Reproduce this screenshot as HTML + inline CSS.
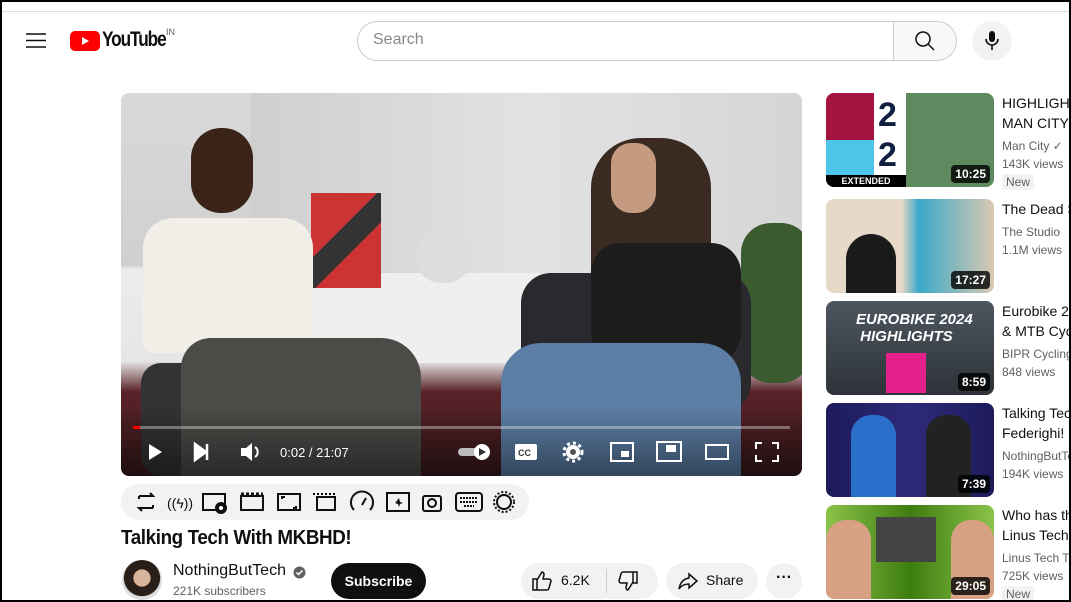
<!DOCTYPE html>
<html><head><meta charset="utf-8"><style>
*{box-sizing:border-box;margin:0;padding:0}
body{width:1071px;height:602px;overflow:hidden;background:#fff;font-family:"Liberation Sans",Arial,sans-serif;position:relative;color:#0f0f0f}
.frame{position:absolute;inset:0;border:2px solid #000;pointer-events:none;z-index:10}
.abs{position:absolute}
.thumb{position:absolute;left:826px;width:168px;height:94px;border-radius:8px;overflow:hidden}
.dur{position:absolute;right:4px;bottom:4px;background:rgba(0,0,0,.8);color:#fff;font-size:12px;font-weight:bold;padding:2px 4px;border-radius:4px}
.st{position:absolute;left:1002px;font-size:14px;white-space:nowrap}
.sm{position:absolute;left:1002px;font-size:12px;color:#606060;white-space:nowrap}
.new{position:absolute;left:1002px;font-size:12px;color:#606060;background:#f2f2f2;padding:1px 4px;border-radius:2px}
.ic{fill:none;stroke:#fff;stroke-width:2}
.tb{fill:none;stroke:#0f0f0f;stroke-width:2}
</style></head><body>
<div class="frame"></div>
<div class="abs" style="left:2px;top:11px;width:1067px;height:1px;background:#ddd"></div>
<svg class="abs" style="left:26px;top:33px" width="20" height="15"><path d="M0 1h20M0 7.5h20M0 14h20" stroke="#0f0f0f" stroke-width="1.6"/></svg>
<svg class="abs" style="left:70px;top:31px" width="32" height="21"><rect width="30" height="20" rx="5" fill="#f00"/><path d="M12 6v8l7-4z" fill="#fff"/></svg>
<div class="abs" style="left:102px;top:28px;font-size:21px;font-weight:bold;letter-spacing:-1.3px;transform:scaleX(.82);transform-origin:left">YouTube</div>
<div class="abs" style="left:166px;top:27px;font-size:9px;color:#606060">IN</div>
<div class="abs" style="left:357px;top:21px;width:537px;height:40px;border:1px solid #ccc;border-radius:20px 0 0 20px;border-right:none"></div>
<div class="abs" style="left:373px;top:31px;font-size:16px;color:#888">Search</div>
<div class="abs" style="left:893px;top:21px;width:64px;height:40px;border:1px solid #ccc;border-radius:0 20px 20px 0;background:#f8f8f8"></div>
<svg class="abs" style="left:914px;top:30px" width="22" height="22"><circle cx="9" cy="9" r="7" fill="none" stroke="#0f0f0f" stroke-width="1.5"/><path d="M14 14l6 6" stroke="#0f0f0f" stroke-width="1.5"/></svg>
<div class="abs" style="left:972px;top:21px;width:40px;height:40px;border-radius:50%;background:#f2f2f2"></div>
<svg class="abs" style="left:984px;top:31px" width="16" height="20"><rect x="5" y="0" width="6" height="11" rx="3" fill="#0f0f0f"/><path d="M2 8a6 6 0 0 0 12 0M8 14v5" stroke="#0f0f0f" stroke-width="1.6" fill="none"/></svg>
<!-- video -->
<div class="abs" style="left:121px;top:93px;width:681px;height:383px;border-radius:8px;overflow:hidden;background:linear-gradient(#d9d9d9 0%,#d0d0d0 45%,#ececec 46%,#e6e6e6 70%,#5a2228 78%,#3a1a1c 100%)">
 <div class="abs" style="left:130px;top:0;width:560px;height:190px;background:linear-gradient(90deg,#cfcfcf,#e2e2e2,#d5d5d5)"></div>
 <div class="abs" style="left:180px;top:180px;width:520px;height:90px;background:#efefef"></div>
 <div class="abs" style="left:190px;top:100px;width:70px;height:95px;background:linear-gradient(135deg,#c33 0 40%,#333 40% 60%,#c33 60%)"></div>
 <div class="abs" style="left:295px;top:140px;width:55px;height:50px;border-radius:25px;background:#ddd"></div>
 <div class="abs" style="left:620px;top:130px;width:70px;height:160px;background:#3b5a2e;border-radius:30px"></div>
 <div class="abs" style="left:20px;top:270px;width:130px;height:113px;background:#333;border-radius:20px"></div>
 <div class="abs" style="left:22px;top:125px;width:170px;height:135px;background:#f2eee8;border-radius:30px 30px 10px 10px"></div>
 <div class="abs" style="left:70px;top:35px;width:62px;height:85px;background:#3a2418;border-radius:30px"></div>
 <div class="abs" style="left:60px;top:245px;width:240px;height:138px;background:#4b4b48;border-radius:30px 40px 0 0"></div>
 <div class="abs" style="left:400px;top:180px;width:230px;height:140px;background:#2a2a2e;border-radius:30px"></div>
 <div class="abs" style="left:470px;top:45px;width:120px;height:210px;background:#3a2a22;border-radius:50px 50px 10px 10px"></div>
 <div class="abs" style="left:490px;top:50px;width:45px;height:70px;background:#c49a80;border-radius:20px"></div>
 <div class="abs" style="left:470px;top:150px;width:150px;height:120px;background:#1c1c1c;border-radius:30px"></div>
 <div class="abs" style="left:380px;top:250px;width:240px;height:133px;background:#5c7ea6;border-radius:40px 40px 0 0"></div>
 <div class="abs" style="left:0;bottom:0;width:681px;height:70px;background:linear-gradient(transparent,rgba(0,0,0,.45))"></div>
 <div class="abs" style="left:12px;top:333px;width:657px;height:3px;background:rgba(255,255,255,.35)"><div style="width:7px;height:3px;background:#f00"></div></div>
</div>
<svg class="abs" style="left:121px;top:436px" width="681" height="32">
 <path d="M28 8v16l13-8z" fill="#fff"/>
 <path d="M74 8v16l11-8zM86 8v16" fill="#fff" stroke="#fff" stroke-width="2.5"/>
 <path d="M120 12h5l6-5v18l-6-5h-5z" fill="#fff"/><path d="M134 11a6 6 0 0 1 0 10" class="ic"/>
 <text x="159" y="21" fill="#fff" font-size="13" font-family="Liberation Sans">0:02 / 21:07</text>
 <rect x="337" y="12" width="24" height="8" rx="4" fill="#bbb"/><circle cx="361" cy="16" r="8" fill="#fff"/><path d="M358 12v8l7-4z" fill="#333"/>
 <rect x="394" y="8" width="22" height="16" rx="2" fill="#fff"/><text x="397" y="20" font-size="9" font-weight="bold" fill="#333" font-family="Liberation Sans">CC</text>
 <circle cx="452" cy="16" r="7" fill="#fff"/><circle cx="452" cy="16" r="9" fill="none" stroke="#fff" stroke-width="3" stroke-dasharray="3 3"/><circle cx="452" cy="16" r="3" fill="#555"/>
 <rect x="490" y="7" width="22" height="18" class="ic"/><rect x="500" y="15" width="8" height="6" fill="#fff"/>
 <rect x="536" y="6" width="24" height="19" class="ic"/><rect x="545" y="9" width="10" height="7" fill="#fff"/>
 <rect x="585" y="9" width="22" height="14" class="ic"/>
 <path d="M635 13V7h6M651 7h6v6M657 19v6h-6M641 25h-6v-6" class="ic" stroke-width="2.5"/>
</svg>
<!-- toolbar -->
<div class="abs" style="left:121px;top:484px;width:408px;height:36px;border-radius:18px;background:#f2f2f2"></div>
<svg class="abs" style="left:121px;top:484px" width="408" height="36">
 <path d="M18 12h14l-3-3M32 24H18l3 3M18 12v3M32 24v-3" class="tb"/>
 <text x="46" y="24" font-size="14" fill="#0f0f0f" font-family="Liberation Sans">((ϟ))</text>
 <rect x="82" y="10" width="22" height="16" class="tb"/><circle cx="100" cy="24" r="6" fill="#0f0f0f"/><circle cx="100" cy="24" r="2" fill="#fff"/>
 <rect x="120" y="12" width="22" height="14" class="tb"/><path d="M120 10h22" stroke="#0f0f0f" stroke-width="3" stroke-dasharray="3 2"/>
 <rect x="157" y="10" width="22" height="16" class="tb"/><path d="M161 15v-2h3M175 22v2h-3" class="tb"/>
 <path d="M192 10h22" stroke="#0f0f0f" stroke-width="2" stroke-dasharray="2 2"/><rect x="196" y="13" width="18" height="13" class="tb"/>
 <path d="M233 26a11 11 0 1 1 16 0" class="tb"/><path d="M241 21l4-7" class="tb"/>
 <rect x="266" y="9" width="22" height="18" class="tb"/><path d="M275 18l3-4 1 4 3 1-3 1-1 3-1-3-3-1z" fill="#0f0f0f"/>
 <rect x="302" y="12" width="18" height="15" rx="2" class="tb"/><circle cx="311" cy="19" r="4" class="tb"/>
 <rect x="335" y="9" width="26" height="18" rx="3" class="tb"/><path d="M339 14h18M339 18h18M343 22h10" stroke="#0f0f0f" stroke-width="2" stroke-dasharray="2 1"/>
 <circle cx="383" cy="18" r="7" class="tb"/><circle cx="383" cy="18" r="10" fill="none" stroke="#0f0f0f" stroke-width="2" stroke-dasharray="2 2"/>
</svg>
<!-- title -->
<div class="abs" style="left:121px;top:527px;font-size:20px;font-weight:bold;letter-spacing:-0.4px;transform:scaleX(.94);transform-origin:left">Talking Tech With MKBHD!</div>
<div class="abs" style="left:122px;top:560px;width:40px;height:40px;border-radius:50%;background:radial-gradient(circle at 50% 45%,#d8b49a 0 28%,#2a1e18 30% 60%,#ddd 62%)"></div>
<div class="abs" style="left:173px;top:562px;font-size:16px">NothingButTech</div>
<svg class="abs" style="left:293px;top:566px" width="13" height="13"><circle cx="6.5" cy="6.5" r="6" fill="#606060"/><path d="M3.5 6.5l2 2 4-4" stroke="#fff" stroke-width="1.5" fill="none"/></svg>
<div class="abs" style="left:173px;top:584px;font-size:12px;color:#606060">221K subscribers</div>
<div class="abs" style="left:331px;top:563px;width:95px;height:36px;border-radius:18px;background:#0f0f0f;color:#fff;font-size:14px;font-weight:bold;text-align:center;line-height:36px">Subscribe</div>
<div class="abs" style="left:521px;top:563px;width:137px;height:36px;border-radius:18px;background:#f2f2f2"></div>
<div class="abs" style="left:606px;top:569px;width:1px;height:24px;background:#ccc"></div>
<svg class="abs" style="left:531px;top:570px" width="22" height="22"><path d="M2 9h4v11H2zM6 10l5-8c2 0 2 2 2 3l-1 4h6c1 0 2 1 2 2l-2 7c0 1-1 2-2 2H6" fill="none" stroke="#0f0f0f" stroke-width="1.5"/></svg>
<div class="abs" style="left:561px;top:572px;font-size:14px">6.2K</div>
<svg class="abs" style="left:617px;top:570px" width="22" height="22"><path d="M20 13h-4V2h4zM16 12l-5 8c-2 0-2-2-2-3l1-4H4c-1 0-2-1-2-2l2-7c0-1 1-2 2-2h10" fill="none" stroke="#0f0f0f" stroke-width="1.5"/></svg>
<div class="abs" style="left:666px;top:563px;width:92px;height:36px;border-radius:18px;background:#f2f2f2"></div>
<svg class="abs" style="left:677px;top:570px" width="22" height="22"><path d="M12 4l8 7-8 7v-4c-5 0-8 2-10 5 1-6 4-10 10-11z" fill="none" stroke="#0f0f0f" stroke-width="1.5"/></svg>
<div class="abs" style="left:706px;top:572px;font-size:14px">Share</div>
<div class="abs" style="left:766px;top:563px;width:36px;height:36px;border-radius:50%;background:#f2f2f2;text-align:center;font-weight:bold;font-size:16px;line-height:30px">···</div>
<!-- sidebar -->
<div class="thumb" style="top:93px;background:linear-gradient(90deg,#a5143f 0 48px,#fff 48px 80px,#5f8a5f 80px)">
 <div class="abs" style="left:0;top:47px;width:48px;height:47px;background:#4ec4e8"></div>
 <div class="abs" style="left:52px;top:2px;font-size:34px;font-weight:bold;color:#122040;line-height:40px">2<br>2</div>
 <div class="abs" style="left:0;bottom:0;width:80px;height:12px;background:#000;color:#fff;font-size:9px;font-weight:bold;text-align:center;line-height:12px">EXTENDED HIGHLIGHTS</div>
 <div class="dur">10:25</div></div>
<div class="st" style="top:95px">HIGHLIGHT</div>
<div class="st" style="top:115px">MAN CITY</div>
<div class="sm" style="top:139px">Man City ✓</div>
<div class="sm" style="top:157px">143K views</div>
<div class="new" style="top:174px">New</div>
<div class="thumb" style="top:199px;background:linear-gradient(90deg,#e7d9c7 0 45%,#3aa9c9 55%,#d9c9b0)">
 <div class="abs" style="left:20px;top:35px;width:50px;height:59px;border-radius:25px 25px 0 0;background:#1a1a1a"></div><div class="dur">17:27</div></div>
<div class="st" style="top:201px">The Dead S</div>
<div class="sm" style="top:225px">The Studio</div>
<div class="sm" style="top:243px">1.1M views</div>
<div class="thumb" style="top:301px;background:linear-gradient(#4d5660,#2d3338)">
 <div class="abs" style="left:30px;top:10px;color:#fff;font-size:15px;font-weight:bold;font-style:italic">EUROBIKE 2024<br>&nbsp;HIGHLIGHTS</div>
 <div class="abs" style="left:60px;top:52px;width:40px;height:40px;background:#e5208a"></div><div class="dur">8:59</div></div>
<div class="st" style="top:303px">Eurobike 2</div>
<div class="st" style="top:323px">&amp; MTB Cyc</div>
<div class="sm" style="top:347px">BIPR Cycling</div>
<div class="sm" style="top:365px">848 views</div>
<div class="thumb" style="top:403px;background:linear-gradient(90deg,#1d1a5a,#2e2a7a,#1d1a5a)">
 <div class="abs" style="left:25px;top:12px;width:45px;height:82px;background:#2a6fc9;border-radius:20px 20px 0 0"></div>
 <div class="abs" style="left:100px;top:12px;width:45px;height:82px;background:#222;border-radius:20px 20px 0 0"></div><div class="dur">7:39</div></div>
<div class="st" style="top:405px">Talking Tec</div>
<div class="st" style="top:425px">Federighi!</div>
<div class="sm" style="top:449px">NothingButTe</div>
<div class="sm" style="top:467px">194K views</div>
<div class="thumb" style="top:505px;background:linear-gradient(90deg,#8bc34a,#3d7d10,#8bc34a)">
 <div class="abs" style="left:50px;top:12px;width:60px;height:45px;background:#444"></div>
 <div class="abs" style="left:0;top:15px;width:45px;height:79px;background:#d9a184;border-radius:20px 20px 0 0"></div>
 <div class="abs" style="left:125px;top:15px;width:43px;height:79px;background:#d9a184;border-radius:20px 20px 0 0"></div><div class="dur">29:05</div></div>
<div class="st" style="top:507px">Who has th</div>
<div class="st" style="top:527px">Linus Tech</div>
<div class="sm" style="top:551px">Linus Tech T</div>
<div class="sm" style="top:569px">725K views</div>
<div class="new" style="top:586px">New</div>
</body></html>
